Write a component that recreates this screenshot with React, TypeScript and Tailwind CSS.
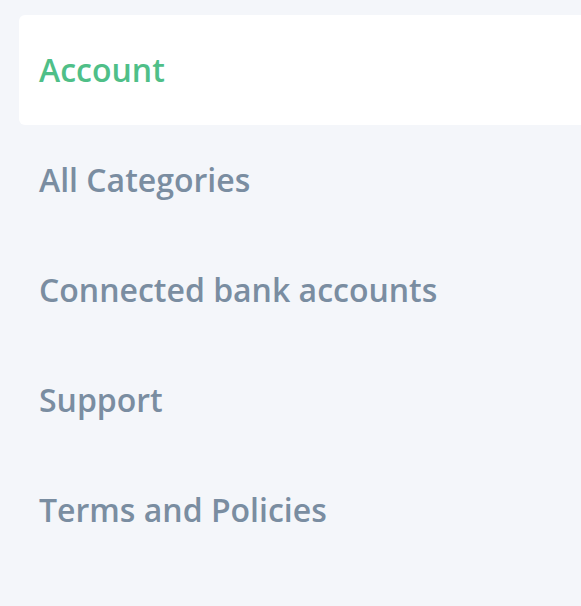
export default function App() {
  const items = ["Account", "All Categories", "Connected bank accounts", "Support", "Terms and Policies"];
  return (
    <div className="min-h-[606px] w-full bg-[#f4f6fa] pt-[15px] pl-[19px] font-['Open_Sans',sans-serif]">
      <ul className="flex flex-col">
        {items.map((t, i) => (
          <li
            key={t}
            className={
              i === 0
                ? "flex h-[110px] items-center rounded-l-[6px] bg-white pl-[20px] text-[32px] font-semibold text-[#4fbf88]"
                : "flex h-[110px] items-center pl-[20px] text-[32px] font-semibold text-[#7a8da1]"
            }
          >
            {t}
          </li>
        ))}
      </ul>
    </div>
  );
}
